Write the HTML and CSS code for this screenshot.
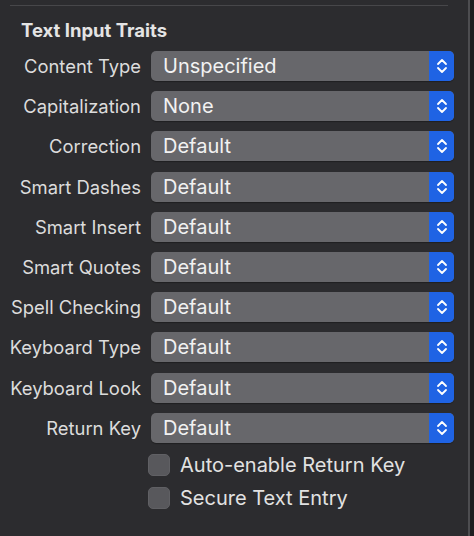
FILE: index.html
```html
<!DOCTYPE html>
<html lang="en">
<head>
  <meta charset="UTF-8">
  <title>Text Input Traits</title>
  <link rel="stylesheet" href="styles.css">
</head>
<body>
  <div class="panel">
    <div class="separator"></div>
    <h2 class="title">Text Input Traits</h2>

    <div class="rows">
      <label class="label">Content Type</label>
      <div class="popup"><span class="value">Unspecified</span><span class="cap"><svg width="12" height="16" viewBox="0 0 12 16"><path d="M2 6 L6 2 L10 6 M2 10 L6 14 L10 10" fill="none" stroke="#fff" stroke-width="1.8" stroke-linecap="round" stroke-linejoin="round"/></svg></span></div>

      <label class="label">Capitalization</label>
      <div class="popup"><span class="value">None</span><span class="cap"><svg width="12" height="16" viewBox="0 0 12 16"><path d="M2 6 L6 2 L10 6 M2 10 L6 14 L10 10" fill="none" stroke="#fff" stroke-width="1.8" stroke-linecap="round" stroke-linejoin="round"/></svg></span></div>

      <label class="label">Correction</label>
      <div class="popup"><span class="value">Default</span><span class="cap"><svg width="12" height="16" viewBox="0 0 12 16"><path d="M2 6 L6 2 L10 6 M2 10 L6 14 L10 10" fill="none" stroke="#fff" stroke-width="1.8" stroke-linecap="round" stroke-linejoin="round"/></svg></span></div>

      <label class="label">Smart Dashes</label>
      <div class="popup"><span class="value">Default</span><span class="cap"><svg width="12" height="16" viewBox="0 0 12 16"><path d="M2 6 L6 2 L10 6 M2 10 L6 14 L10 10" fill="none" stroke="#fff" stroke-width="1.8" stroke-linecap="round" stroke-linejoin="round"/></svg></span></div>

      <label class="label">Smart Insert</label>
      <div class="popup"><span class="value">Default</span><span class="cap"><svg width="12" height="16" viewBox="0 0 12 16"><path d="M2 6 L6 2 L10 6 M2 10 L6 14 L10 10" fill="none" stroke="#fff" stroke-width="1.8" stroke-linecap="round" stroke-linejoin="round"/></svg></span></div>

      <label class="label">Smart Quotes</label>
      <div class="popup"><span class="value">Default</span><span class="cap"><svg width="12" height="16" viewBox="0 0 12 16"><path d="M2 6 L6 2 L10 6 M2 10 L6 14 L10 10" fill="none" stroke="#fff" stroke-width="1.8" stroke-linecap="round" stroke-linejoin="round"/></svg></span></div>

      <label class="label">Spell Checking</label>
      <div class="popup"><span class="value">Default</span><span class="cap"><svg width="12" height="16" viewBox="0 0 12 16"><path d="M2 6 L6 2 L10 6 M2 10 L6 14 L10 10" fill="none" stroke="#fff" stroke-width="1.8" stroke-linecap="round" stroke-linejoin="round"/></svg></span></div>

      <label class="label">Keyboard Type</label>
      <div class="popup"><span class="value">Default</span><span class="cap"><svg width="12" height="16" viewBox="0 0 12 16"><path d="M2 6 L6 2 L10 6 M2 10 L6 14 L10 10" fill="none" stroke="#fff" stroke-width="1.8" stroke-linecap="round" stroke-linejoin="round"/></svg></span></div>

      <label class="label">Keyboard Look</label>
      <div class="popup"><span class="value">Default</span><span class="cap"><svg width="12" height="16" viewBox="0 0 12 16"><path d="M2 6 L6 2 L10 6 M2 10 L6 14 L10 10" fill="none" stroke="#fff" stroke-width="1.8" stroke-linecap="round" stroke-linejoin="round"/></svg></span></div>

      <label class="label">Return Key</label>
      <div class="popup"><span class="value">Default</span><span class="cap"><svg width="12" height="16" viewBox="0 0 12 16"><path d="M2 6 L6 2 L10 6 M2 10 L6 14 L10 10" fill="none" stroke="#fff" stroke-width="1.8" stroke-linecap="round" stroke-linejoin="round"/></svg></span></div>
    </div>

    <div class="checks">
      <div class="check"><span class="box"></span>Auto-enable Return Key</div>
      <div class="check"><span class="box"></span>Secure Text Entry</div>
    </div>
  </div>
  <div class="edge"></div>
</body>
</html>
```

FILE: styles.css
```css
body {
  margin: 0;
  padding: 0;
  font-family: 'Inter', 'Roboto', sans-serif;
  background: #1e1e20;
  display: flex;
  height: 536px;
  overflow: hidden;
  color: #dedede;
}

.panel {
  width: 468px;
  background: #2c2c2f;
  border-right: 2px solid #4d4d50;
  padding-top: 5px;
}

.separator {
  height: 1px;
  background: #47474a;
  margin: 0 20px 0 10px;
}

.title {
  margin: 13px 0 0 21px;
  font-size: 18.5px;
  font-weight: 700;
  color: #e4e4e4;
  line-height: 22px;
}

.rows {
  display: grid;
  grid-template-columns: 141px 303px;
  column-gap: 10px;
  row-gap: 10.2px;
  margin-top: 10px;
}

.label {
  text-align: right;
  font-size: 18.4px;
  line-height: 30px;
  color: #dcdcdc;
  white-space: nowrap;
}

.popup {
  height: 30px;
  background: #67676b;
  border-radius: 5px;
  display: flex;
  align-items: center;
  box-shadow: 0 1px 1px rgba(0, 0, 0, 0.3);
}

.value {
  flex: 1;
  padding-left: 12px;
  font-size: 20px;
  color: #f2f2f2;
}

.cap {
  width: 25px;
  height: 30px;
  background: #1f63e4;
  border-radius: 0 5px 5px 0;
  display: flex;
  align-items: center;
  justify-content: center;
}

.checks {
  margin: 11px 0 0 148px;
  display: flex;
  flex-direction: column;
  gap: 11px;
}

.check {
  display: flex;
  align-items: center;
  font-size: 20px;
  color: #e2e2e2;
  height: 22px;
}

.box {
  width: 22px;
  height: 22px;
  border-radius: 5px;
  background: #58585c;
  margin-right: 10px;
  box-sizing: border-box;
  border: 1px solid #606064;
}

.edge {
  flex: 1;
}
```
